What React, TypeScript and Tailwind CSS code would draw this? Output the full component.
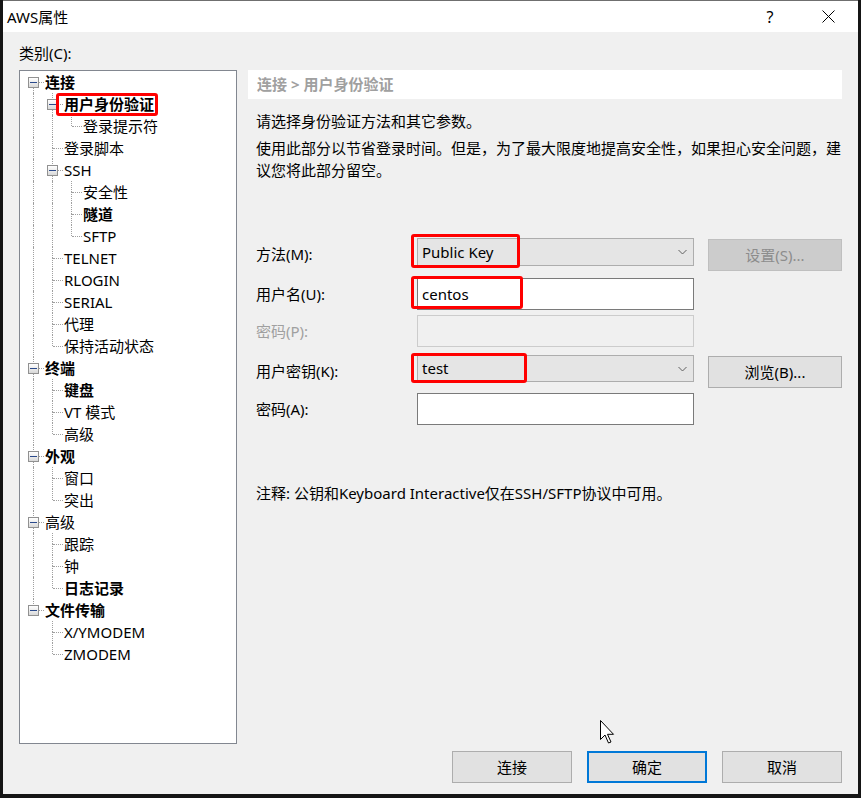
import React from "react";

type Node = { t: string; b?: boolean; c?: Node[]; hl?: boolean };

const tree: Node[] = [
  {
    t: "连接",
    b: true,
    c: [
      { t: "用户身份验证", b: true, hl: true, c: [{ t: "登录提示符" }] },
      { t: "登录脚本" },
      { t: "SSH", c: [{ t: "安全性" }, { t: "隧道", b: true }, { t: "SFTP" }] },
      { t: "TELNET" },
      { t: "RLOGIN" },
      { t: "SERIAL" },
      { t: "代理" },
      { t: "保持活动状态" },
    ],
  },
  { t: "终端", b: true, c: [{ t: "键盘", b: true }, { t: "VT 模式" }, { t: "高级" }] },
  { t: "外观", b: true, c: [{ t: "窗口" }, { t: "突出" }] },
  { t: "高级", c: [{ t: "跟踪" }, { t: "钟" }, { t: "日志记录", b: true }] },
  { t: "文件传输", b: true, c: [{ t: "X/YMODEM" }, { t: "ZMODEM" }] },
];

type Row = { n: Node; level: number; anc: boolean[]; last: boolean; firstRoot: boolean };

function flatten(nodes: Node[], level: number, anc: boolean[], out: Row[]): Row[] {
  nodes.forEach((n, i) => {
    const last = i === nodes.length - 1;
    out.push({ n, level, anc, last, firstRoot: level === 0 && i === 0 });
    if (n.c) flatten(n.c, level + 1, [...anc, last], out);
  });
  return out;
}

const rows = flatten(tree, 0, [], []);

function Expander() {
  return (
    <div className="absolute left-[4px] top-[6px] z-10 h-[11px] w-[11px] border border-[#919191] bg-linear-to-b from-white to-[#d9d9d9]">
      <div className="absolute left-[1px] top-[4px] h-[1px] w-[7px] bg-[#2b4a8b]" />
    </div>
  );
}

function TreeRow({ r }: { r: Row }) {
  return (
    <div className="relative flex h-[22px] items-center">
      {r.anc.map((isLast, k) => (
        <div key={k} className="relative h-full w-[19px] shrink-0">
          {!isLast && (
            <div className="absolute left-[9px] top-0 h-full border-l border-dotted border-[#a0a0a0]" />
          )}
        </div>
      ))}
      <div className="relative h-full w-[19px] shrink-0">
        {!r.firstRoot && (
          <div className="absolute left-[9px] top-0 h-[11px] border-l border-dotted border-[#a0a0a0]" />
        )}
        {!r.last && (
          <div className="absolute left-[9px] top-[11px] h-[11px] border-l border-dotted border-[#a0a0a0]" />
        )}
        <div className="absolute left-[10px] top-[11px] w-[10px] border-t border-dotted border-[#a0a0a0]" />
        {r.n.c && <Expander />}
      </div>
      <span className={r.n.b ? "ml-[2px] whitespace-nowrap font-bold" : "ml-[2px] whitespace-nowrap"}>
        {r.n.t}
      </span>
      {r.n.hl && (
        <div className="absolute left-[32px] top-0 z-20 h-[23px] w-[102px] rounded-[3px] border-[3px] border-[#ff0000]" />
      )}
    </div>
  );
}

function Chevron() {
  return (
    <svg width="9" height="5" viewBox="0 0 9 5" className="absolute right-[6px] top-1/2 -translate-y-1/2">
      <polyline points="0.5,0.5 4.5,4.5 8.5,0.5" fill="none" stroke="#606060" strokeWidth="1" />
    </svg>
  );
}

function Label({ children, disabled }: { children: React.ReactNode; disabled?: boolean }) {
  return (
    <div
      className={
        disabled
          ? "flex h-[32px] w-[161px] shrink-0 items-center text-[#a0a0a0]"
          : "flex h-[32px] w-[161px] shrink-0 items-center"
      }
    >
      {children}
    </div>
  );
}

function Cursor() {
  return (
    <svg
      width="16"
      height="25"
      viewBox="0 0 16 25"
      className="absolute left-[600px] top-[720px] z-30"
    >
      <path
        d="M0.5,0.5 L0.5,19.5 L5,15 L8.5,23 L11,22 L7.5,14.3 L13.5,14.3 Z"
        fill="#ffffff"
        stroke="#000000"
        strokeWidth="1"
        strokeLinejoin="miter"
      />
    </svg>
  );
}

export default function App() {
  return (
    <div className="relative flex h-[798px] w-[861px] flex-col bg-[#151515] font-['Noto_Sans','Noto_Sans_CJK_SC',sans-serif] text-[15px] leading-[22px] text-black">
      <div className="flex h-[794px]">
        <div className="w-[3px] shrink-0" />
        <div className="flex w-[855px] shrink-0 flex-col border-t border-[#6f6f6f]">
          {/* Title bar */}
          <div className="flex h-[31px] items-center bg-white">
            <span className="pl-[4px] text-[15px]">AWS属性</span>
            <div className="ml-auto flex w-[46px] justify-center text-[16px]">?</div>
            <div className="ml-[12px] mr-[7px] flex w-[46px] justify-center">
              <svg width="13" height="13" viewBox="0 0 13 13">
                <line x1="0.5" y1="0.5" x2="12.5" y2="12.5" stroke="#000" strokeWidth="1" />
                <line x1="12.5" y1="0.5" x2="0.5" y2="12.5" stroke="#000" strokeWidth="1" />
              </svg>
            </div>
          </div>

          {/* Body */}
          <div className="flex flex-1 flex-col bg-[#f0f0f0] px-[16px] pb-[11px]">
            <div className="flex gap-[11px]">
              {/* Left column */}
              <div className="flex w-[218px] shrink-0 flex-col">
                <div className="h-[38px] pt-[11px] leading-[20px]">类别(C):</div>
                <div className="h-[674px] border border-[#828790] bg-white pl-[4px]">
                  {rows.map((r, i) => (
                    <TreeRow key={i} r={r} />
                  ))}
                </div>
              </div>

              {/* Right column */}
              <div className="flex w-[594px] shrink-0 flex-col pt-[38px]">
                <div className="h-[29px] bg-white pl-[9px] font-bold leading-[29px] text-[#a0a0a0]">
                  连接 &gt; 用户身份验证
                </div>
                <div className="mt-[11px] pl-[8px]">请选择身份验证方法和其它参数。</div>
                <div className="mt-[5px] whitespace-nowrap pl-[8px]">
                  使用此部分以节省登录时间。但是，为了最大限度地提高安全性，如果担心安全问题，建
                  <br />
                  议您将此部分留空。
                </div>

                {/* Form */}
                <div className="mt-[57px] flex flex-col pl-[8px]">
                  {/* Row 1 */}
                  <div className="flex h-[33px] items-start">
                    <Label>方法(M):</Label>
                    <div className="relative h-[28px] w-[277px] shrink-0 border border-[#adadad] bg-[#e5e5e5] pl-[4px] leading-[26px]">
                      Public Key
                      <Chevron />
                      <div className="absolute left-[-7px] top-[-5px] z-20 h-[34px] w-[109px] rounded-[3px] border-[3px] border-[#ff0000]" />
                    </div>
                    <div className="ml-[14px] mt-[1px] flex h-[32px] w-[134px] shrink-0 items-center justify-center border border-[#bfbfbf] bg-[#cccccc] text-[#8c8c8c]">
                      设置(S)...
                    </div>
                  </div>

                  {/* Row 2 */}
                  <div className="mt-[7px] flex h-[32px] items-start">
                    <Label>用户名(U):</Label>
                    <div className="relative h-[32px] w-[277px] shrink-0 border border-[#7a7a7a] bg-white pl-[4px] leading-[30px]">
                      centos
                      <div className="absolute left-[-7px] top-[-3px] z-20 h-[33px] w-[112px] rounded-[3px] border-[3px] border-[#ff0000]" />
                    </div>
                  </div>

                  {/* Row 3 */}
                  <div className="mt-[5px] flex h-[32px] items-start">
                    <Label disabled>密码(P):</Label>
                    <div className="h-[32px] w-[277px] shrink-0 border border-[#cccccc] bg-[#f0f0f0]" />
                  </div>

                  {/* Row 4 */}
                  <div className="mt-[8px] flex h-[33px] items-start">
                    <Label>用户密钥(K):</Label>
                    <div className="relative h-[27px] w-[277px] shrink-0 border border-[#adadad] bg-[#e5e5e5] pl-[4px] leading-[25px]">
                      test
                      <Chevron />
                      <div className="absolute left-[-7px] top-[-3px] z-20 h-[30px] w-[116px] rounded-[3px] border-[3px] border-[#ff0000]" />
                    </div>
                    <div className="ml-[14px] mt-[1px] flex h-[32px] w-[134px] shrink-0 items-center justify-center border border-[#adadad] bg-[#e1e1e1]">
                      浏览(B)...
                    </div>
                  </div>

                  {/* Row 5 */}
                  <div className="mt-[5px] flex h-[32px] items-start">
                    <Label>密码(A):</Label>
                    <div className="h-[32px] w-[277px] shrink-0 border border-[#7a7a7a] bg-white" />
                  </div>
                </div>

                <div className="mt-[57px] pl-[8px]">
                  注释: 公钥和Keyboard Interactive仅在SSH/SFTP协议中可用。
                </div>
              </div>
            </div>

            {/* Bottom buttons */}
            <div className="mt-[7px] flex justify-end gap-[15px]">
              <div className="flex h-[32px] w-[120px] items-center justify-center border border-[#adadad] bg-[#e1e1e1]">
                连接
              </div>
              <div className="flex h-[32px] w-[120px] items-center justify-center border-2 border-[#0078d7] bg-[#e1e1e1]">
                确定
              </div>
              <div className="flex h-[32px] w-[120px] items-center justify-center border border-[#adadad] bg-[#e1e1e1]">
                取消
              </div>
            </div>
          </div>
        </div>
        <div className="w-[3px] shrink-0" />
      </div>
      <Cursor />
    </div>
  );
}
